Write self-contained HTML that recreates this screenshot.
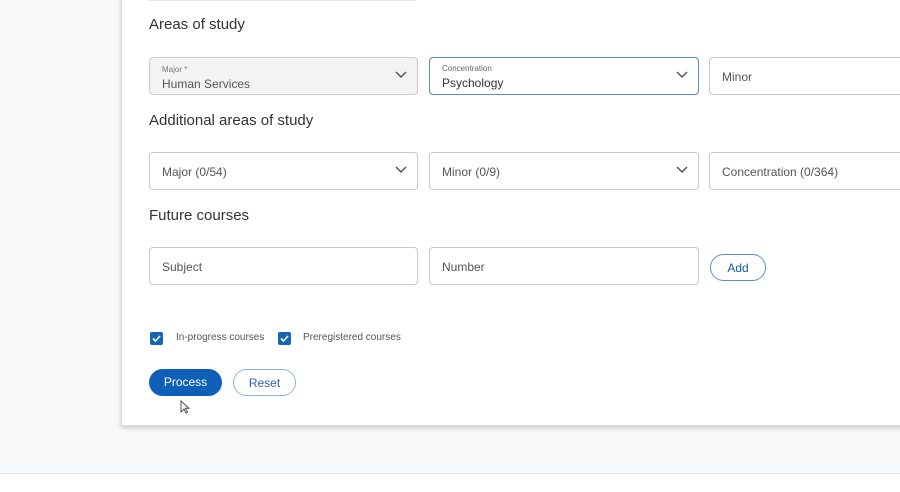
<!DOCTYPE html>
<html><head><style>
body{margin:0;width:900px;height:491px;overflow:hidden;background:#f7f8f9;font-family:"Liberation Sans",sans-serif;position:relative}
.card{position:absolute;left:121px;top:-10px;width:800px;height:434px;background:#fff;border:1px solid #ddd;box-shadow:0 2px 4px rgba(0,0,0,.18)}
.bottom{position:absolute;left:0;top:473px;width:900px;height:18px;background:#fff;border-top:1px solid #e2e2e2}
.a{position:absolute}
h3{position:absolute;margin:0;font-weight:normal;font-size:15px;color:#333}
.f{position:absolute;height:36px;border:1px solid #c8c8c8;border-radius:4px;background:#fff;box-sizing:border-box;height:38px;font-size:12px;color:#555}
.f span{position:absolute;left:12px;top:12px}
.chev{position:absolute;right:10px;top:13px;width:12px;height:8px}
.btn{position:absolute;height:27px;border-radius:14px;font-size:12px;text-align:center;line-height:26px;box-sizing:border-box}
.cb{position:absolute;width:13px;height:13px;background:#1a63b5;border-radius:2px}
</style></head><body>
<div class="card"></div>
<div class="a" style="left:148px;top:0;width:268px;height:1px;background:#e6e6e6"></div>
<h3 style="left:149px;top:16px">Areas of study</h3>
<div class="f" style="left:149px;top:57px;width:269px;background:#f3f3f3">
<div class="a" style="left:12px;top:7px;font-size:8px;color:#777">Major *</div>
<div class="a" style="left:12px;top:19px;font-size:12px;color:#555">Human Services</div>
<svg class="chev" viewBox="0 0 12 8"><path d="M1 1l5 5 5-5" fill="none" stroke="#555" stroke-width="1.5"/></svg></div>
<div class="f" style="left:429px;top:57px;width:270px;border:1.5px solid #5b8ed0">
<div class="a" style="left:12px;top:6px;font-size:8px;color:#666">Concentration</div>
<div class="a" style="left:12px;top:18px;font-size:12px;color:#333">Psychology</div>
<svg class="chev" viewBox="0 0 12 8"><path d="M1 1l5 5 5-5" fill="none" stroke="#555" stroke-width="1.5"/></svg></div>
<div class="f" style="left:709px;top:57px;width:220px"><span>Minor</span></div>
<h3 style="left:149px;top:112px">Additional areas of study</h3>
<div class="f" style="left:149px;top:152px;width:269px"><span>Major (0/54)</span><svg class="chev" viewBox="0 0 12 8"><path d="M1 1l5 5 5-5" fill="none" stroke="#555" stroke-width="1.5"/></svg></div>
<div class="f" style="left:429px;top:152px;width:270px"><span>Minor (0/9)</span><svg class="chev" viewBox="0 0 12 8"><path d="M1 1l5 5 5-5" fill="none" stroke="#555" stroke-width="1.5"/></svg></div>
<div class="f" style="left:709px;top:152px;width:220px"><span>Concentration (0/364)</span></div>
<h3 style="left:149px;top:207px">Future courses</h3>
<div class="f" style="left:149px;top:247px;width:269px"><span>Subject</span></div>
<div class="f" style="left:429px;top:247px;width:270px"><span>Number</span></div>
<div class="btn" style="left:710px;top:254px;width:56px;border:1.5px solid #5b8ed0;color:#1a5aa8">Add</div>
<div class="cb" style="left:150px;top:332px"><svg width="13" height="13" viewBox="0 0 13 13"><path d="M3 6.5l2.5 2.5 4.5-5" fill="none" stroke="#fff" stroke-width="1.6"/></svg></div>
<div class="a" style="left:176px;top:332px;font-size:10px;color:#555">In-progress courses</div>
<div class="cb" style="left:278px;top:332px"><svg width="13" height="13" viewBox="0 0 13 13"><path d="M3 6.5l2.5 2.5 4.5-5" fill="none" stroke="#fff" stroke-width="1.6"/></svg></div>
<div class="a" style="left:303px;top:332px;font-size:10px;color:#555">Preregistered courses</div>
<div class="btn" style="left:149px;top:369px;width:73px;background:#0d5fb8;color:#fff">Process</div>
<div class="btn" style="left:233px;top:369px;width:63px;border:1.5px solid #8fb2da;color:#2a63a8">Reset</div>
<svg class="a" style="left:180px;top:400px" width="10" height="15" viewBox="0 0 10 15"><path d="M1 1v11l3-3 2 4 1.5-.7-2-4H9z" fill="#fff" stroke="#555" stroke-width="1"/></svg>
<div class="bottom"></div>
</body></html>
